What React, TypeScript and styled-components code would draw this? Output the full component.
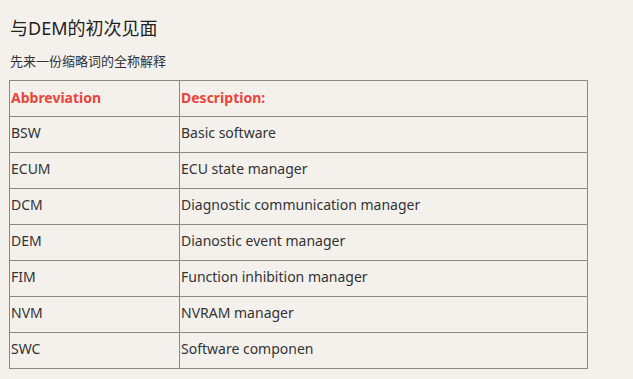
import * as React from 'react';
import styled, {createGlobalStyle} from 'styled-components';

const rows: [string, string][] = [
    ['BSW', 'Basic software'],
    ['ECUM', 'ECU state manager'],
    ['DCM', 'Diagnostic communication manager'],
    ['DEM', 'Dianostic event manager'],
    ['FIM', 'Function inhibition manager'],
    ['NVM', 'NVRAM manager'],
    ['SWC', 'Software componen'],
];

const App = () => {
    return (
        <Page>
            <GlobalStyle />
            <Title>与DEM的初次见面</Title>
            <Intro>先来一份缩略词的全称解释</Intro>
            <Table>
                <thead>
                    <tr>
                        <HeadCell>Abbreviation</HeadCell>
                        <HeadCell>Description:</HeadCell>
                    </tr>
                </thead>
                <tbody>
                    {rows.map(([abbr, desc]) => (
                        <tr key={abbr}>
                            <AbbrCell>{abbr}</AbbrCell>
                            <Cell>{desc}</Cell>
                        </tr>
                    ))}
                </tbody>
            </Table>
        </Page>
    );
};

const GlobalStyle = createGlobalStyle`
    html, body {
        margin: 0;
        background: #f4f1ed;
    }
`;

const Page = styled.div`
    width: 633px;
    height: 379px;
    padding: 15px 0 0 9px;
    box-sizing: border-box;
    overflow: hidden;
    color: #333;
    font-family: 'Noto Sans', 'Noto Sans CJK SC', sans-serif;
`;

const Title = styled.h2`
    margin: 0 0 0 1px;
    font-size: 18px;
    font-weight: 400;
    line-height: 26px;
    color: #222;
`;

const Intro = styled.p`
    margin: 11px 0 0 1px;
    font-size: 13px;
    line-height: 18px;
`;

const Table = styled.table`
    margin-top: 10px;
    width: 579px;
    border-collapse: collapse;
    font-size: 14px;
`;

const Cell = styled.td`
    height: 36px;
    box-sizing: border-box;
    padding: 0 0 3px 1px;
    border: 1px solid #888;
    vertical-align: middle;
    line-height: 18px;
`;

const AbbrCell = styled(Cell)`
    width: 170px;
`;

const HeadCell = styled.th`
    height: 36px;
    box-sizing: border-box;
    padding: 0 0 3px 1px;
    border: 1px solid #888;
    text-align: left;
    font-weight: 700;
    color: #e8453c;
    &:first-child {
        width: 170px;
    }
`;

export default App;
